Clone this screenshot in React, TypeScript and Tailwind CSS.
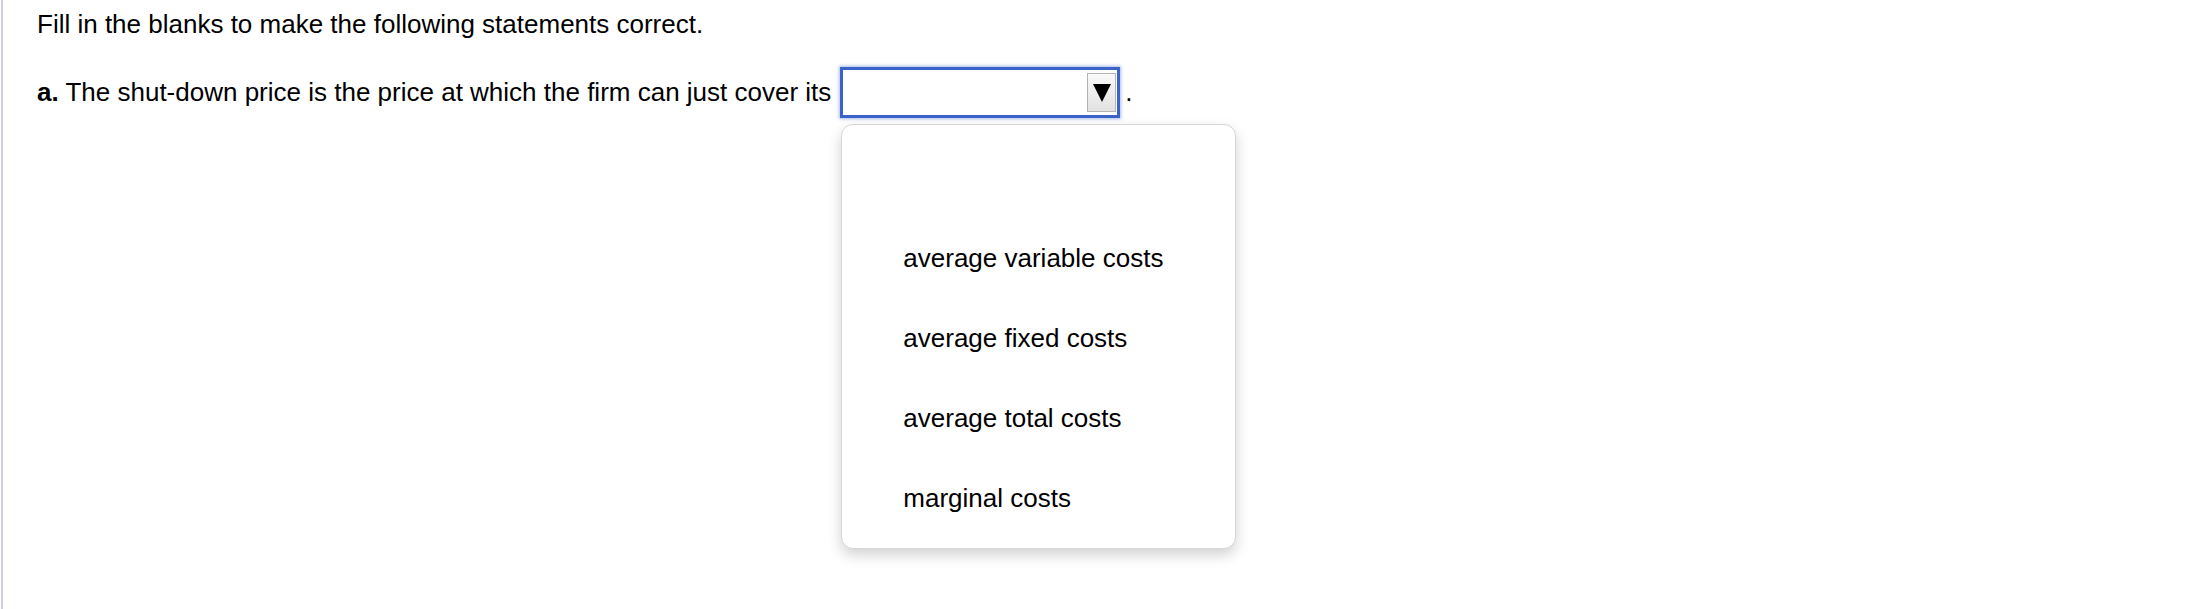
import React from 'react';

const options = ['', 'average variable costs', 'average fixed costs', 'average total costs', 'marginal costs'];

export default function App() {
  return (
    <div className="min-h-[609px] bg-white ml-[1px] border-l-2 border-[#cdd0dd] text-black text-[26px]" style={{ fontFamily: '"Liberation Sans", Arial, Helvetica, sans-serif' }}>
      <div className="pl-[34px] pt-[9px]">
        <p className="leading-[30px]">Fill in the blanks to make the following statements correct.</p>

        <div className="mt-[28px] flex items-center">
          <span className="leading-[30px] pb-[2px]">
            <b>a.</b> The shut-down price is the price at which the firm can just cover its
          </span>

          <div className="relative ml-[9px]">
            {/* focused select box */}
            <div className="w-[280px] h-[51px] border-[3px] border-[#3a63c8] bg-white shadow-[0_0_3px_1px_rgba(58,99,200,0.45)] flex items-center justify-end pr-[1px]">
              <div className="w-[29px] h-[39px] border border-[#b3b3b3] bg-gradient-to-b from-[#fafafa] to-[#e2e2e2] flex items-center justify-center">
                <svg width="18" height="18" viewBox="0 0 18 18">
                  <polygon points="0,0 18,0 9,18" fill="#000" />
                </svg>
              </div>
            </div>

            {/* open dropdown list */}
            <div className="absolute left-[1px] top-[57px] w-[395px] h-[425px] bg-white rounded-[12px] border border-[#d6d6d6] shadow-[0_6px_14px_rgba(0,0,0,0.18)] pt-[13px] pb-[10px]">
              {options.map((o, i) => (
                <div key={i} className="h-[80px] flex items-center pl-[61px] leading-[30px] whitespace-nowrap">
                  {o}
                </div>
              ))}
            </div>
          </div>

          <span className="leading-[30px] pb-[2px] ml-[5px]">.</span>
        </div>
      </div>
    </div>
  );
}
